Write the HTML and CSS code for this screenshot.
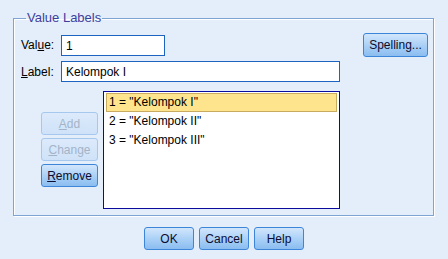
FILE: index.html
```
<!DOCTYPE html>
<html lang="en">
<head>
  <meta charset="UTF-8" />
  <title>Value Labels</title>
  <link rel="stylesheet" href="styles.css">
</head>
<body>

  <fieldset class="group">
    <legend>Value Labels</legend>

    <div class="row row-value">
      <label for="value">Val<u>u</u>e:</label>
      <input type="text" id="value" class="field field-short" value="1">
      <button class="btn btn-spelling">Spelling...</button>
    </div>

    <div class="row row-label">
      <label for="label"><u>L</u>abel:</label>
      <input type="text" id="label" class="field field-long" value="Kelompok I">
    </div>

    <div class="row row-list">
      <div class="actions">
        <button class="btn btn-side" disabled><u>A</u>dd</button>
        <button class="btn btn-side" disabled><u>C</u>hange</button>
        <button class="btn btn-side"><u>R</u>emove</button>
      </div>
      <ul class="list">
        <li class="selected">1 = "Kelompok I"</li>
        <li>2 = "Kelompok II"</li>
        <li>3 = "Kelompok III"</li>
      </ul>
    </div>
  </fieldset>

  <div class="footer">
    <button class="btn btn-foot">OK</button>
    <button class="btn btn-foot">Cancel</button>
    <button class="btn btn-foot">Help</button>
  </div>

</body>
</html>
```

FILE: styles.css
```
body {
  margin: 0;
  background: #e3eefa;
  font-family: "Liberation Sans", Arial, sans-serif;
  font-size: 12px;
  color: #000;
}

.group {
  margin: 11px 0 0 13px;
  width: 421px;
  box-sizing: border-box;
  padding: 8px 5px 6px 7px;
  border: 1px solid #7ea4d4;
  box-shadow: 1px 1px 0 #fff, inset 1px 1px 0 #fff;
}

.group legend {
  margin-left: 5px;
  padding: 0 1px;
  color: #3e3e9e;
  font-size: 13px;
  line-height: 14px;
}

.row {
  display: flex;
  align-items: center;
}

.row label {
  width: 40px;
}

.field {
  height: 21px;
  box-sizing: border-box;
  border: 1px solid #1c64c0;
  padding: 1px 4px 0;
  font-family: inherit;
  font-size: 12px;
  background: #fff;
  outline: none;
}

.field-short {
  width: 104px;
  margin-top: 1px;
}

.field-long {
  width: 279px;
}

.row-label {
  margin-top: 4px;
}

.btn {
  height: 23px;
  box-sizing: border-box;
  padding: 0;
  border: 1px solid #3d85d9;
  border-radius: 3px;
  background: linear-gradient(#d2e6fb, #a8cff6 55%, #8bbdf0);
  font-family: inherit;
  font-size: 12px;
  color: #0c0c30;
}

.btn:disabled {
  border-color: #a6c8ee;
  background: linear-gradient(#dceafb, #cfe2f8);
  color: #a3b4c9;
}

.btn-spelling {
  width: 65px;
  height: 24px;
  margin-left: auto;
}

.row-list {
  align-items: flex-start;
  margin-top: 9px;
}

.actions {
  display: flex;
  flex-direction: column;
  gap: 3px;
  width: 57px;
  margin: 21px 5px 0 20px;
}

.btn-side {
  width: 57px;
}

.list {
  width: 237px;
  height: 118px;
  box-sizing: border-box;
  margin: 0;
  padding: 1px 2px;
  list-style: none;
  background: #fff;
  border: 1px solid #0a0a9c;
}

.list li {
  height: 17px;
  line-height: 17px;
  padding: 0 2px;
  border: 1px solid transparent;
  white-space: nowrap;
}

.list li.selected {
  background: #fee58d;
  border-color: #c9ab5f;
}

.footer {
  display: flex;
  justify-content: center;
  gap: 5px;
  margin-top: 11px;
}

.btn-foot {
  width: 50px;
}
```
